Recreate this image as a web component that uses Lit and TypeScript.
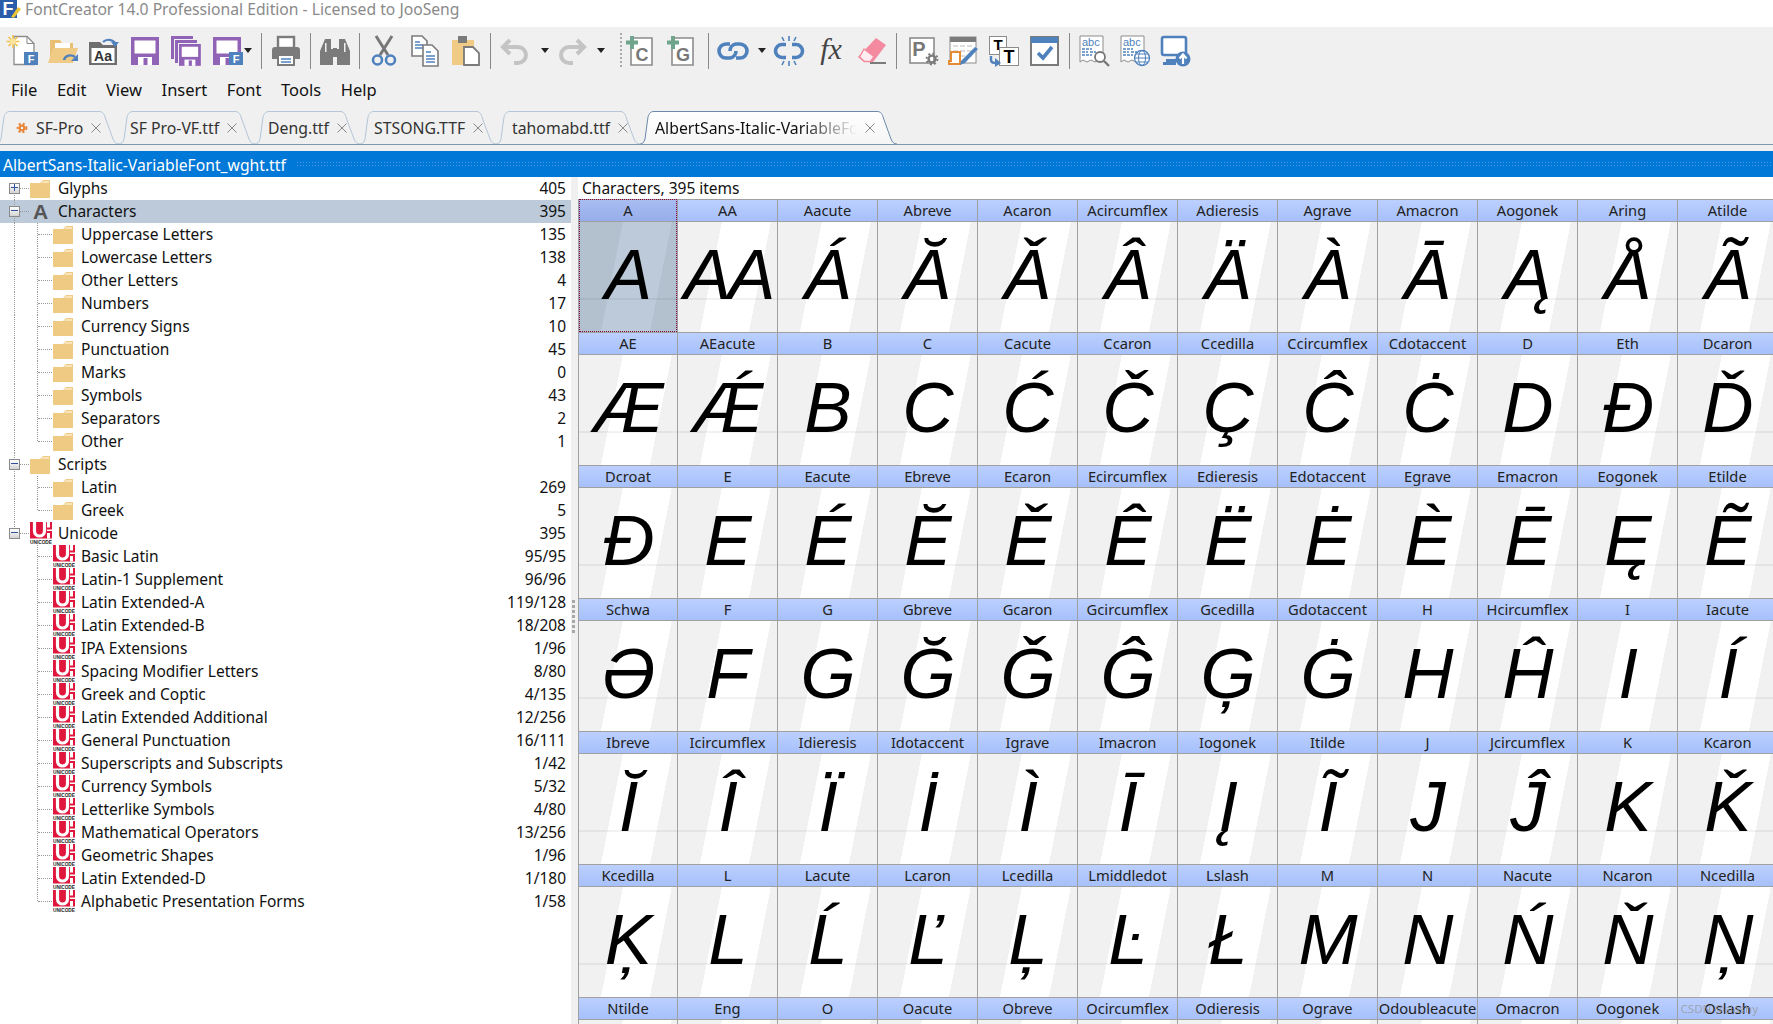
import { LitElement, html, css, svg } from "lit";
import { customElement } from "lit/decorators.js";

const BLUE = "#4f81bd";
const GRAY = "#7b7b7b";
const PURPLE = "#9163b6";
const PAGE = "#8c8c8c";

const icon = (body: unknown) =>
  html`<svg width="32" height="32" viewBox="0 0 32 32">${body}</svg>`;

const fBadge = (x: number, y: number) => svg`
  <rect x=${x} y=${y} width="14" height="13" fill=${BLUE} />
  <text x=${x + 7} y=${y + 11} font-size="11" font-weight="700" font-family="Liberation Sans" text-anchor="middle" fill="#fff">F</text>`;

const floppy = (x: number, y: number, s: number) => svg`
  <g transform="translate(${x} ${y}) scale(${s})">
    <rect x="0" y="0" width="28" height="28" fill=${PURPLE} />
    <rect x="3.5" y="3.5" width="21" height="13" fill="#fff" />
    <rect x="7" y="20" width="14" height="8" fill="#fff" />
    <rect x="12.5" y="21" width="4" height="7" fill=${PURPLE} />
  </g>`;

const plusPage = (letter: string) => svg`
  <path d="M5 3H26V30H5Z" fill="#fff" stroke=${PAGE} stroke-width="1.6" />
  <rect x="0" y="5.5" width="12" height="4" fill="#6fa58c" />
  <rect x="4" y="1" width="4" height="13" fill="#6fa58c" />
  <text x="16" y="26" font-size="18" font-weight="700" font-family="Liberation Sans" text-anchor="middle" fill="#777">${letter}</text>`;

const gear = (cx: number, cy: number, c: string, r = 3.4) => svg`
  <circle cx=${cx} cy=${cy} r=${r} fill="none" stroke=${c} stroke-width="2.4" />
  <circle cx=${cx} cy=${cy} r=${r + 2} fill="none" stroke=${c} stroke-width="2" stroke-dasharray="2 2.2" />`;

const abcDoc = () => svg`
  <path d="M2 1H25V27L21 25L17 27L13 25L9 27L5 25L2 27Z" fill="#fff" stroke=${PAGE} stroke-width="1" />
  <text x="4" y="11" font-size="11" font-family="Liberation Sans" fill=${BLUE}>abc</text>
  <path d="M4 14H14M4 17H10M12 17H18M4 20H14" stroke=${BLUE} stroke-width="1.4" stroke-dasharray="3 1" />`;

const icons: Record<string, unknown> = {
  newFont: icon(svg`
    <path d="M8 1.5H21L28 8.5V29.5H8Z" fill="#fff" stroke=${PAGE} stroke-width="1.3" />
    <path d="M21 1.5V8.5H28" fill="none" stroke=${PAGE} />
    <path d="M7 0V13M0.5 6.5H13.5M2.5 2L11.5 11M11.5 2L2.5 11" stroke="#f2c14e" stroke-width="1.6" />
    <circle cx="7" cy="6.5" r="3" fill="#fbe39a" />
    ${fBadge(18, 17)}`),
  open: icon(svg`
    <path d="M3 5H13L15 8H26V27H3Z" fill="#e8bf73" />
    <path d="M8 8H23V14H8Z" fill="#fff" />
    <path d="M1 28L6 13H31L26 28Z" fill="#f0cb85" />
    <path d="M17 25a6.5 5.5 0 0 1 11 -3" fill="none" stroke=${BLUE} stroke-width="2.4" />
    <path d="M31 19V26H24Z" fill=${BLUE} />`),
  fontFile: icon(svg`
    <path d="M1 30V7H12L15 10H29V30Z" fill="#6e6e6e" />
    <rect x="3.5" y="13" width="23" height="15" fill="#fff" />
    <text x="15" y="26" font-size="14" font-weight="700" font-family="Liberation Sans" text-anchor="middle" fill="#333">Aa</text>
    <path d="M15 7a7 5.5 0 0 1 12 1" fill="none" stroke=${BLUE} stroke-width="2.2" />
    <path d="M23 7H31L27 12Z" fill=${BLUE} />`),
  save: icon(floppy(2, 2, 1)),
  saveAll: icon(svg`
    <path d="M1 1H23V4H4V24H1Z" fill=${PURPLE} />
    <path d="M5 5H27V8H8V28H5Z" fill=${PURPLE} />
    ${floppy(9, 9, 0.78)}`),
  saveAs: icon(svg`${floppy(2, 2, 1)}${fBadge(18, 17)}`),
  print: icon(svg`
    <rect x="8" y="2" width="16" height="11" fill="#fff" stroke=${GRAY} stroke-width="2.4" />
    <path d="M2 15Q2 12 5 12H27Q30 12 30 15V24H25V19H7V24H2Z" fill=${GRAY} />
    <rect x="8" y="20" width="16" height="10" fill="#fff" stroke=${GRAY} stroke-width="2" />
    <path d="M11 24H21M11 27H21" stroke=${BLUE} stroke-width="1.4" />`),
  find: icon(svg`
    <path d="M6 4H12V14H14V22H4V30H1V16ZM20 4H26V4L31 16V30H18V22H18V14H20Z" fill=${GRAY} />
    <path d="M1 18H14V30H1Z" fill=${GRAY} />
    <rect x="14" y="13" width="4" height="9" fill=${GRAY} />
    <rect x="6" y="8" width="1.5" height="9" fill="#f0f0f0" />
    <rect x="25" y="8" width="1.5" height="9" fill="#f0f0f0" />`),
  cut: icon(svg`
    <path d="M8 1L20 20M24 1L12 20" stroke="#777" stroke-width="3" />
    <circle cx="9.5" cy="25" r="4.5" fill="none" stroke=${BLUE} stroke-width="2.6" />
    <circle cx="22.5" cy="25" r="4.5" fill="none" stroke=${BLUE} stroke-width="2.6" />`),
  copy: icon(svg`
    <path d="M3 1H13L18 6V21H3Z" fill="#fff" stroke=${GRAY} stroke-width="1.6" />
    <path d="M6 7H11M6 10H14M6 13H14" stroke=${BLUE} stroke-width="1.4" />
    <path d="M14 10H23L29 16V31H14Z" fill="#fff" stroke=${GRAY} stroke-width="1.6" />
    <path d="M17 17H22M17 21H26M17 24H26M17 27H26" stroke=${BLUE} stroke-width="1.5" />`),
  paste: icon(svg`
    <path d="M2 5H24V30H2Z" fill="#f0cb85" />
    <rect x="8" y="1" width="9" height="7" fill=${GRAY} />
    <path d="M14 12H23L29 18V30H14Z" fill="#fff" stroke=${GRAY} stroke-width="1.8" />`),
  undo: icon(svg`
    <path d="M11 5L4 12L11 19" fill="none" stroke="#c4c4c4" stroke-width="4" />
    <path d="M5 12H19A8 8 0 0 1 19 28H15" fill="none" stroke="#c4c4c4" stroke-width="4" />`),
  redo: icon(svg`
    <path d="M21 5L28 12L21 19" fill="none" stroke="#c4c4c4" stroke-width="4" />
    <path d="M27 12H13A8 8 0 0 0 13 28H17" fill="none" stroke="#c4c4c4" stroke-width="4" />`),
  addC: icon(plusPage("C")),
  addG: icon(plusPage("G")),
  link: icon(svg`
    <path d="M13 9H9A7 7 0 0 0 9 23H13A7 7 0 0 0 19 16" fill="none" stroke=${BLUE} stroke-width="3.6" />
    <path d="M19 23H23A7 7 0 0 0 23 9H19A7 7 0 0 0 13 16" fill="none" stroke=${BLUE} stroke-width="3.6" />`),
  unlink: icon(svg`
    <path d="M13 9.5H9A6.5 6.5 0 0 0 9 22.5H13" fill="none" stroke=${BLUE} stroke-width="3.6" />
    <path d="M19 9.5H23A6.5 6.5 0 0 1 23 22.5H19" fill="none" stroke=${BLUE} stroke-width="3.6" />
    <path d="M16 1V6M9 2L11 6M23 2L21 6M16 26V31M9 30L11 26M23 30L21 26" stroke=${BLUE} stroke-width="1.6" />`),
  fx: icon(svg`<text x="16" y="24" font-size="30" font-style="italic" font-family="Liberation Serif" text-anchor="middle" fill="#444">fx</text>`),
  erase: icon(svg`
    <path d="M20 3L30 10L17 27H8L2 22Z" fill="#f48aa0" />
    <path d="M8 14L18 21.5L14.5 26.5H8.5L3.5 22Z" fill="#fff" opacity="0.85" />
    <path d="M8 14L18 21.5L14.5 26.5H8.5L3.5 22Z" fill="none" stroke="#f48aa0" stroke-width="1.4" />
    <rect x="14" y="27" width="16" height="2" fill=${GRAY} />`),
  props: icon(svg`
    <rect x="2" y="3" width="24" height="25" fill="#fff" stroke=${PAGE} stroke-width="1.6" />
    <text x="11" y="21" font-size="20" font-weight="700" font-family="Liberation Sans" text-anchor="middle" fill="#777">P</text>
    ${gear(24, 24, GRAY)}`),
  meta: icon(svg`
    <rect x="3" y="2" width="26" height="26" fill="#fff" stroke=${PAGE} />
    <rect x="3" y="2" width="26" height="5" fill=${GRAY} />
    <path d="M6 11H27M6 16H27M6 21H27" stroke="#bbb" stroke-dasharray="5 2" />
    <path d="M4 17H13V29H2V26H4Z" fill="#fff" stroke="#e58b33" stroke-width="2" />
    <path d="M14 26L28 12L31 14L18 28L13 30Z" fill=${BLUE} />`),
  replace: icon(svg`
    <rect x="1.5" y="1.5" width="17" height="18" fill="#fff" stroke=${PAGE} />
    <text x="10" y="15" font-size="15" font-weight="700" font-family="Liberation Sans" text-anchor="middle" fill="#000">T</text>
    <rect x="11.5" y="12.5" width="19" height="18" fill="#fff" stroke=${PAGE} />
    <text x="21" y="28" font-size="18" font-weight="700" font-family="Liberation Sans" text-anchor="middle" fill="#000">T</text>
    <path d="M3 21V25Q3 28 8 28" fill="none" stroke=${BLUE} stroke-width="2.4" />
    <path d="M7 23L13 28L7 32Z" fill=${BLUE} />`),
  check: icon(svg`
    <rect x="2" y="2" width="27" height="28" fill="#fff" stroke=${GRAY} stroke-width="2" />
    <rect x="2" y="2" width="27" height="6" fill=${BLUE} />
    <path d="M9 18L14 23L23 12" fill="none" stroke=${BLUE} stroke-width="3.6" />`),
  abcFind: icon(svg`
    ${abcDoc()}
    <circle cx="22" cy="22" r="5" fill="#fff" stroke="#777" stroke-width="1.8" />
    <path d="M26 26L31 31" stroke="#777" stroke-width="2.4" />`),
  abcWeb: icon(svg`
    ${abcDoc()}
    <circle cx="23" cy="23" r="7.5" fill="#fff" stroke=${BLUE} stroke-width="1.3" />
    <ellipse cx="23" cy="23" rx="3.5" ry="7.5" fill="none" stroke=${BLUE} />
    <path d="M15.5 23H30.5M17 19H29M17 27H29" stroke=${BLUE} />`),
  upload: icon(svg`
    <rect x="2" y="2" width="24" height="18" rx="2" fill="#fff" stroke=${BLUE} stroke-width="2.6" />
    <path d="M6 24H16V30H3V27H6Z" fill=${BLUE} />
    <circle cx="23" cy="24" r="7.5" fill=${BLUE} />
    <path d="M23 29V20M19.5 23.5L23 19.5L26.5 23.5" fill="none" stroke="#fff" stroke-width="2.2" />`),
};

type TbItem = { k: "icon" | "drop" | "sep" | "grip"; i?: string; ml?: number };
const toolbar: TbItem[] = [
  { k: "icon", i: "newFont" }, { k: "icon", i: "open" }, { k: "icon", i: "fontFile" },
  { k: "icon", i: "save" }, { k: "icon", i: "saveAll" }, { k: "icon", i: "saveAs" },
  { k: "drop", ml: -3 }, { k: "sep", ml: 9 },
  { k: "icon", i: "print", ml: 3.5 }, { k: "sep", ml: 3.5 },
  { k: "icon", i: "find", ml: 3.5 }, { k: "sep", ml: 3.5 },
  { k: "icon", i: "cut", ml: 3.5 }, { k: "icon", i: "copy" }, { k: "icon", i: "paste" }, { k: "sep", ml: 3.5 },
  { k: "icon", i: "undo", ml: 3.5 }, { k: "drop", ml: 5 },
  { k: "icon", i: "redo", ml: 3 }, { k: "drop", ml: 4 }, { k: "grip", ml: 15 },
  { k: "icon", i: "addC" }, { k: "icon", i: "addG" }, { k: "sep", ml: 4.5 },
  { k: "icon", i: "link", ml: 3.5 }, { k: "drop", ml: 4 },
  { k: "icon", i: "unlink", ml: 3 }, { k: "icon", i: "fx", ml: 1 }, { k: "icon", i: "erase" }, { k: "sep", ml: 3.5 },
  { k: "icon", i: "props", ml: 6.5 }, { k: "icon", i: "meta", ml: -2 }, { k: "icon", i: "replace" }, { k: "icon", i: "check" }, { k: "sep", ml: 3.5 },
  { k: "icon", i: "abcFind", ml: 3.5 }, { k: "icon", i: "abcWeb" }, { k: "icon", i: "upload" },
];

const menus = ["File", "Edit", "View", "Insert", "Font", "Tools", "Help"];

const tabs = [
  { t: "SF-Pro", w: 123, pad: 20, gear: true },
  { t: "SF Pro-VF.ttf", w: 136, pad: 11 },
  { t: "Deng.ttf", w: 105, pad: 13 },
  { t: "STSONG.TTF", w: 136, pad: 14 },
  { t: "tahomabd.ttf", w: 144, pad: 16 },
  { t: "AlbertSans-Italic-VariableFont_wght.ttf", w: 257, pad: 15, active: true },
];

const tabPath = (w: number) =>
  `M0 33C3 33 4 31 5 28L8 6C9 2 11 .5 14 .5H${w - 20}C${w - 17} .5 ${w - 15} 2 ${w - 14} 6L${w - 6} 28C${w - 5} 31 ${w - 3} 33 ${w} 33`;

type Row = {
  label: string; count: string; level: number;
  ic: "folder" | "letter" | "unicode";
  box?: "+" | "-"; root?: "full" | "top" | "bottom"; child?: "full" | "last"; sel?: boolean;
};

const kids = (list: [string, string][], ic: Row["ic"], root?: Row["root"]): Row[] =>
  list.map(([label, count], i) => ({
    label, count, level: 1, ic, root,
    child: i === list.length - 1 ? "last" : "full",
  }));

const rows: Row[] = [
  { label: "Glyphs", count: "405", level: 0, ic: "folder", box: "+", root: "bottom" },
  { label: "Characters", count: "395", level: 0, ic: "letter", box: "-", root: "full", sel: true },
  ...kids([
    ["Uppercase Letters", "135"], ["Lowercase Letters", "138"], ["Other Letters", "4"],
    ["Numbers", "17"], ["Currency Signs", "10"], ["Punctuation", "45"], ["Marks", "0"],
    ["Symbols", "43"], ["Separators", "2"], ["Other", "1"],
  ], "folder", "full"),
  { label: "Scripts", count: "", level: 0, ic: "folder", box: "-", root: "full" },
  ...kids([["Latin", "269"], ["Greek", "5"]], "folder", "full"),
  { label: "Unicode", count: "395", level: 0, ic: "unicode", box: "-", root: "top" },
  ...kids([
    ["Basic Latin", "95/95"], ["Latin-1 Supplement", "96/96"], ["Latin Extended-A", "119/128"],
    ["Latin Extended-B", "18/208"], ["IPA Extensions", "1/96"], ["Spacing Modifier Letters", "8/80"],
    ["Greek and Coptic", "4/135"], ["Latin Extended Additional", "12/256"], ["General Punctuation", "16/111"],
    ["Superscripts and Subscripts", "1/42"], ["Currency Symbols", "5/32"], ["Letterlike Symbols", "4/80"],
    ["Mathematical Operators", "13/256"], ["Geometric Shapes", "1/96"], ["Latin Extended-D", "1/180"],
    ["Alphabetic Presentation Forms", "1/58"],
  ], "unicode"),
];

const glyphNames = `A AA Aacute Abreve Acaron Acircumflex Adieresis Agrave Amacron Aogonek Aring Atilde
AE AEacute B C Cacute Ccaron Ccedilla Ccircumflex Cdotaccent D Eth Dcaron
Dcroat E Eacute Ebreve Ecaron Ecircumflex Edieresis Edotaccent Egrave Emacron Eogonek Etilde
Schwa F G Gbreve Gcaron Gcircumflex Gcedilla Gdotaccent H Hcircumflex I Iacute
Ibreve Icircumflex Idieresis Idotaccent Igrave Imacron Iogonek Itilde J Jcircumflex K Kcaron
Kcedilla L Lacute Lcaron Lcedilla Lmiddledot Lslash M N Nacute Ncaron Ncedilla
Ntilde Eng O Oacute Obreve Ocircumflex Odieresis Ograve Odoubleacute Omacron Oogonek Oslash`.split(/\s+/);

const glyphChars = `A AA Á Ă Ǎ Â Ä À Ā Ą Å Ã
Æ Ǽ B C Ć Č Ç Ĉ Ċ D Ð Ď
Đ E É Ĕ Ě Ê Ë Ė È Ē Ę Ẽ
Ə F G Ğ Ǧ Ĝ Ģ Ġ H Ĥ I Í
Ĭ Î Ï İ Ì Ī Į Ĩ J Ĵ K Ǩ
Ķ L Ĺ Ľ Ļ Ŀ Ł M N Ń Ň Ņ
Ñ Ŋ O Ó Ŏ Ô Ö Ò Ő Ō Ǫ Ø`.split(/\s+/);

const folderIcon = html`<svg width="20" height="18" viewBox="0 0 20 18">
  <path d="M0 3H10L13 0H20V18H0Z" fill="#efca82" />
  <path d="M13 1H19V3H11Z" fill="#f8e4b8" />
</svg>`;

const unicodeIcon = html`<svg width="22" height="23" viewBox="0 0 22 23">
  <rect x="0" y="0" width="22" height="16.5" fill="#e0173d" />
  <path d="M4.5 0V9A5 5 0 0 0 14.5 9V0" fill="none" stroke="#fff" stroke-width="3.2" />
  <path d="M17 0H20V5.5H17ZM17 7.5H22V9H17ZM17 11H20V16.5H17Z" fill="#fff" />
  <text x="11" y="22" font-size="5.6" font-weight="700" font-family="Liberation Sans" text-anchor="middle" textLength="22" lengthAdjust="spacingAndGlyphs" fill="#222">UNICODE</text>
</svg>`;

@customElement("app-root")
export class AppRoot extends LitElement {
  static styles = css`
    :host {
      display: flex;
      flex-direction: column;
      width: 100%;
      height: 100vh;
      overflow: hidden;
      background: #fff;
      font-family: "Noto Sans", "Open Sans", sans-serif;
      font-size: 15.5px;
      color: #111;
    }
    svg { display: block; flex: none; }

    .title { display: flex; flex: none; height: 27px; background: #fff; overflow: hidden; }
    .logo { width: 21px; height: 19px; margin-right: 4px; flex: none; }
    .title span { font-size: 15.7px; line-height: 18px; color: #8a8a8a; white-space: nowrap; }

    .chrome { flex: none; background: #f0f0f0; height: 124px; }
    .tools { display: flex; align-items: center; height: 47px; padding-left: 1px; }
    .tb { flex: none; width: 41px; display: flex; justify-content: center; }
    .drop { flex: none; width: 0; height: 0; border: 4px solid transparent; border-top: 5px solid #222; border-bottom: 0; }
    .sep { flex: none; width: 1px; height: 36px; background: #888; }
    .grip { flex: none; width: 2px; height: 36px; background: repeating-linear-gradient(#aaa 0 2px, transparent 2px 4px); }

    .menu { display: flex; gap: 19.5px; height: 31px; padding-left: 11px; align-items: center; font-size: 16.5px; color: #111; }

    .tabs { display: flex; height: 33px; margin-top: 6px; border-bottom: 1px solid #7f97b4; overflow: hidden; }
    .tab { position: relative; flex: none; box-sizing: border-box; display: flex; align-items: center; height: 34px; font-size: 15.8px; color: #333; }
    .tab:first-child { margin-left: -4px; }
    .tab svg.shape { position: absolute; left: 0; top: 0; }
    .tab > span, .tab > svg.x, .tab > svg.g { position: relative; }
    .tab.active { color: #111; }
    .tab .name { white-space: nowrap; }
    .tab.active .name { width: 202px; overflow: hidden; -webkit-mask-image: linear-gradient(to right, #000 72%, transparent 100%); mask-image: linear-gradient(to right, #000 72%, transparent 100%); }
    .tab svg.g { margin-right: 8px; }
    .tab svg.x { margin-left: 8px; }

    .docbar { flex: none; box-sizing: border-box; display: flex; align-items: center; height: 26px; background: #0078d7; color: #fff; padding: 1px 0 0 3px; font-size: 15.7px; white-space: nowrap; }
    .dots { flex: 1; height: 7px; margin-left: 10px; background-image: radial-gradient(circle, #4a9ae2 0.8px, transparent 0.9px); background-size: 3px 3px; }

    .main { flex: 1; display: flex; min-height: 0; }
    .tree { flex: none; width: 571px; }
    .row { position: relative; display: flex; align-items: center; height: 23px; white-space: nowrap; }
    .row.sel { background: #bccad9; }
    .row .label { flex: 1; margin-bottom: 2px; }
    .row .count { padding-right: 5px; margin-bottom: 2px; }
    .row.l0 { padding-left: 30px; }
    .row.l1 { padding-left: 53px; }
    .row .ic { flex: none; width: 28px; height: 23px; display: flex; align-items: center; }
    .letter { font-family: "Liberation Sans", sans-serif; font-weight: 700; font-size: 21px; color: #555; line-height: 21px; padding-left: 3px; }

    .vl { position: absolute; border-left: 1px dotted #999; }
    .vl.root { left: 14px; }
    .vl.child { left: 37px; }
    .vl.full { top: 0; height: 23px; }
    .vl.top { top: 0; height: 11px; }
    .vl.bottom { top: 12px; height: 11px; }
    .hl { position: absolute; top: 11px; border-top: 1px dotted #999; }
    .hl.h0 { left: 20px; width: 9px; }
    .hl.h1 { left: 38px; width: 14px; }
    .box { position: absolute; left: 9px; top: 6px; width: 11px; height: 11px; box-sizing: border-box; border: 1px solid #8a8a8a; background: linear-gradient(#fff, #d4d4d4); }
    .box::before { content: ""; position: absolute; left: 1px; top: 3px; width: 7px; height: 1px; background: #33529c; }
    .box.plus::after { content: ""; position: absolute; left: 4px; top: 0; width: 1px; height: 7px; background: #33529c; }

    .split { flex: none; position: relative; width: 7px; background: #f0f0f0; }
    .split::after { content: ""; position: absolute; left: 1px; top: 423px; width: 3px; height: 33px; background: repeating-linear-gradient(#a8a8a8 0 3px, transparent 3px 5px); }

    .right { flex: 1; min-width: 0; display: flex; flex-direction: column; position: relative; overflow: hidden; }
    .caption { flex: none; height: 22px; line-height: 22px; padding-left: 4px; }
    .grid { display: grid; grid-template-columns: 99px repeat(11, 100px); grid-auto-rows: 133px; }
    .cell { position: relative; box-sizing: border-box; border-left: 1px solid #a0a0a0; }
    .cell .head { box-sizing: border-box; height: 23px; line-height: 21px; text-align: center; white-space: nowrap; overflow: hidden; border-top: 1px solid #a0a0a0; border-bottom: 1px solid #a0a0a0; background: linear-gradient(#bcd0ff, #a6c0fb); color: #222; font-size: 14.7px; }
    .cell .body {
      position: relative; box-sizing: border-box; height: 110px; overflow: hidden; text-align: center; padding-left: 1px;
      font-family: "Liberation Sans", sans-serif; font-style: italic; font-size: 71px; line-height: 105px; color: #000;
      background: linear-gradient(101.3deg, #f1f1f1 43px, #fff 43px, #fff 91px, #f1f1f1 91px);
    }
    .body::before { content: ""; position: absolute; left: 0; right: 0; top: 76px; height: 2px; background: rgba(0, 0, 0, 0.05); }
    .body span { position: relative; }
    .tight { letter-spacing: -3px; }
    .cell.sel .head { background: linear-gradient(#a9bcf2, #96aeea); }
    .cell.sel .body { background: linear-gradient(101.3deg, #b3c1cf 43px, #bccad9 43px, #bccad9 91px, #b3c1cf 91px); }
    .cell.sel::after { content: ""; position: absolute; left: 0; right: 0; top: 0; bottom: 0; border: 1px dotted #800040; }

    .mark { position: absolute; right: 15px; bottom: 8px; font-size: 11.5px; color: #999; opacity: 0.8; white-space: nowrap; }
  `;

  private renderTool(t: TbItem) {
    const st = t.ml ? `margin-left:${t.ml}px` : "";
    if (t.k === "sep") return html`<div class="sep" style=${st}></div>`;
    if (t.k === "grip") return html`<div class="grip" style=${st}></div>`;
    if (t.k === "drop") return html`<div class="drop" style=${st}></div>`;
    return html`<div class="tb" style=${st}>${icons[t.i as string]}</div>`;
  }

  private renderTab(t: (typeof tabs)[number]) {
    const fill = t.active ? "url(#tabfill)" : "none";
    return html`<div class="tab ${t.active ? "active" : ""}" style="width:${t.w}px;padding-left:${t.pad}px">
      <svg class="shape" width=${t.w} height="34">
        <defs><linearGradient id="tabfill" x1="0" y1="0" x2="0" y2="1"><stop offset="0" stop-color="#fff" /><stop offset="1" stop-color="#f5f5f5" /></linearGradient></defs>
        <path d=${tabPath(t.w)} fill=${fill} stroke=${t.active ? "#6d88aa" : "#b4c6d8"} />
      </svg>
      ${t.gear ? html`<svg class="g" width="12" height="12" viewBox="0 0 12 12">${gear(6, 6, "#e8873a", 2.4)}</svg>` : ""}
      <span class="name">${t.t}</span>
      <svg class="x" width="10" height="10" viewBox="0 0 10 10"><path d="M.5 .5L9.5 9.5M9.5 .5L.5 9.5" stroke="#888" stroke-width="1" /></svg>
    </div>`;
  }

  private renderRow(r: Row) {
    return html`<div class="row l${r.level} ${r.sel ? "sel" : ""}">
      ${r.root ? html`<i class="vl root ${r.root}"></i>` : ""}
      ${r.child ? html`<i class="vl child ${r.child === "last" ? "top" : "full"}"></i>` : ""}
      <i class="hl ${r.level ? "h1" : "h0"}"></i>
      ${r.box ? html`<i class="box ${r.box === "+" ? "plus" : ""}"></i>` : ""}
      <div class="ic">
        ${r.ic === "folder" ? folderIcon : r.ic === "unicode" ? unicodeIcon : html`<span class="letter">A</span>`}
      </div>
      <span class="label">${r.label}</span>
      <span class="count">${r.count}</span>
    </div>`;
  }

  private renderCell(name: string, i: number) {
    const ch = glyphChars[i];
    return html`<div class="cell ${i === 0 ? "sel" : ""}">
      <div class="head">${name}</div>
      <div class="body"><span class=${ch === "AA" ? "tight" : ""}>${ch}</span></div>
    </div>`;
  }

  render() {
    return html`
      <div class="title">
        <svg class="logo" viewBox="0 0 21 19">
          <rect x="0" y="0" width="17" height="18" fill="#2a5caa" />
          <text x="8" y="15" font-size="18" font-weight="700" font-family="Liberation Sans" text-anchor="middle" fill="#fff">F</text>
          <path d="M11 17L18 7L21 9L14 18Z" fill="#e9c23a" />
        </svg>
        <span>FontCreator 14.0 Professional Edition - Licensed to JooSeng</span>
      </div>
      <div class="chrome">
        <div class="tools">${toolbar.map((t) => this.renderTool(t))}</div>
        <div class="menu">${menus.map((m) => html`<span>${m}</span>`)}</div>
        <div class="tabs">${tabs.map((t) => this.renderTab(t))}</div>
      </div>
      <div class="docbar">
        <span>AlbertSans-Italic-VariableFont_wght.ttf</span>
        <div class="dots"></div>
      </div>
      <div class="main">
        <div class="tree">${rows.map((r) => this.renderRow(r))}</div>
        <div class="split"></div>
        <div class="right">
          <div class="caption">Characters, 395 items</div>
          <div class="grid">${glyphNames.map((n, i) => this.renderCell(n, i))}</div>
          <div class="mark">CSDN @slashy</div>
        </div>
      </div>
    `;
  }
}
